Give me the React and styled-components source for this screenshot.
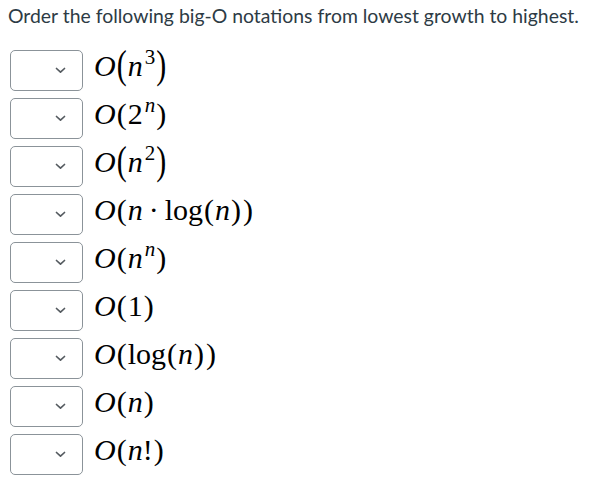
import React from 'react';
import styled, { createGlobalStyle } from 'styled-components';

const GlobalStyle = createGlobalStyle`
  body {
    margin: 0;
    background: #ffffff;
  }
`

const Page = styled.div`
  padding: 4px 8px 0 8px;
  font-family: Lato, "Open Sans", sans-serif;
  color: #2d3b45;
`

const Prompt = styled.p`
  margin: 0 0 23px 0;
  font-size: 19.4px;
  line-height: 23px;
`

const List = styled.div`
  display: flex;
  flex-direction: column;
  gap: 7px;
`

const Row = styled.div`
  display: flex;
  align-items: flex-start;
  gap: 11px;
`

const SelectBox = styled.div`
  box-sizing: border-box;
  width: 73px;
  height: 41px;
  margin-left: 2px;
  display: flex;
  align-items: center;
  justify-content: flex-end;
  padding-right: 16px;
  border: 1px solid #8b9399;
  border-radius: 5px;
  background: #ffffff;
`

const Chevron = () => (
  <svg width="11" height="7" viewBox="0 0 11 7">
    <path d="M1.5 1.5 L5.5 5.2 L9.5 1.5" fill="none" stroke="#555b60" strokeWidth="1.7" strokeLinecap="round" strokeLinejoin="round" />
  </svg>
)

const Math = styled.span`
  padding-top: 1px;
  font-family: "Liberation Serif", "Times New Roman", serif;
  font-size: 30px;
  line-height: 30px;
  color: #000000;
  white-space: nowrap;
`

const V = styled.i`
  font-style: italic;
`

const Paren = styled.span`
  display: inline-block;
  transform: ${p => (p.$tall ? 'scaleY(1.3)' : 'none')};
  transform-origin: center 60%;
  margin: 0 1px;
`

const Sup = styled.sup`
  font-size: 21px;
  line-height: 0;
  vertical-align: 12px;
  margin-left: 2px;
  font-style: ${p => (p.$italic ? 'italic' : 'normal')};
`

const Dot = styled.span`
  margin: 0 6px;
`

const items = [
  <><V>O</V><Paren $tall>(</Paren><V>n</V><Sup>3</Sup><Paren $tall>)</Paren></>,
  <><V>O</V><Paren>(</Paren>2<Sup $italic>n</Sup><Paren>)</Paren></>,
  <><V>O</V><Paren $tall>(</Paren><V>n</V><Sup>2</Sup><Paren $tall>)</Paren></>,
  <><V>O</V><Paren>(</Paren><V>n</V><Dot>·</Dot>log<Paren>(</Paren><V>n</V><Paren>)</Paren><Paren>)</Paren></>,
  <><V>O</V><Paren>(</Paren><V>n</V><Sup $italic>n</Sup><Paren>)</Paren></>,
  <><V>O</V><Paren>(</Paren>1<Paren>)</Paren></>,
  <><V>O</V><Paren>(</Paren>log<Paren>(</Paren><V>n</V><Paren>)</Paren><Paren>)</Paren></>,
  <><V>O</V><Paren>(</Paren><V>n</V><Paren>)</Paren></>,
  <><V>O</V><Paren>(</Paren><V>n</V>!<Paren>)</Paren></>,
]

const App = () => {
  return (
    <Page>
      <GlobalStyle />
      <Prompt>Order the following big-O notations from lowest growth to highest.</Prompt>
      <List>
        {items.map((expr, i) => (
          <Row key={i}>
            <SelectBox>
              <Chevron />
            </SelectBox>
            <Math>{expr}</Math>
          </Row>
        ))}
      </List>
    </Page>
  )
}

export default App;
